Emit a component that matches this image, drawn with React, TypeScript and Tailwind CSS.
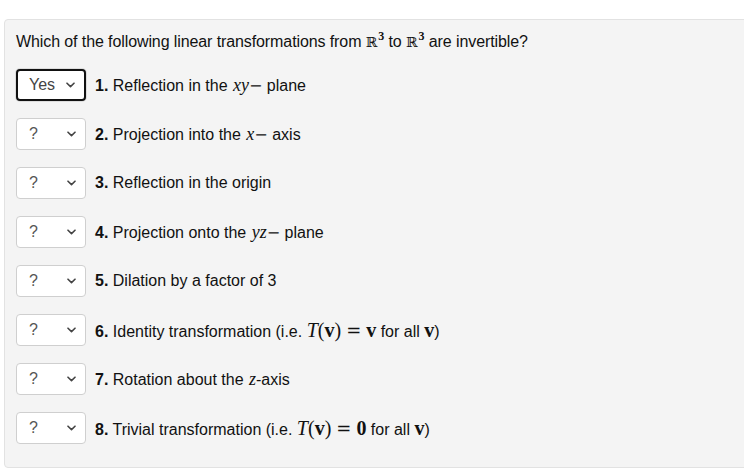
import React from "react";

const MI = ({ children }: { children: React.ReactNode }) => (
  <span className="italic text-[18px] leading-none font-['Liberation_Serif',serif] ml-[1px]">{children}</span>
);

const Minus = () => (
  <span className="text-[16px] leading-none font-['DejaVu_Serif',serif]">−</span>
);

const R = () => (
  <span className="inline-flex items-start leading-none">
    <span className="text-[14px] font-['DejaVu_Serif',serif]">ℝ</span>
    <span className="text-[12px] font-bold font-['Liberation_Serif',serif] relative -top-[5px] ml-[1px]">3</span>
  </span>
);

const Chevron = () => (
  <svg width="9" height="6" viewBox="0 0 9 6" className="absolute right-[9px] top-1/2 -translate-y-1/2 pointer-events-none">
    <path d="M1 1.2 L4.5 4.6 L8 1.2" fill="none" stroke="#444" strokeWidth="1.6" strokeLinecap="round" strokeLinejoin="round" />
  </svg>
);

const Select = ({ value, focused = false }: { value: string; focused?: boolean }) => (
  <div
    className={`relative w-[70px] h-[32px] shrink-0 rounded-[4px] bg-white flex items-center pl-[12px] ${
      focused ? "border-[2px] border-[#111] shadow-[0_0_0_1px_#ddd]" : "border border-[#cfcfcf]"
    }`}
  >
    <span className={`text-[16px] ${focused ? "text-[#444] -ml-[1px]" : "text-[#555]"}`}>{value}</span>
    <Chevron />
  </div>
);

const TV = ({ rhs }: { rhs: string }) => (
  <span className="text-[20px] leading-none font-['Liberation_Serif',serif]">
    <i>T</i>(<b>v</b>)<span className="mx-[5px] font-normal font-['DejaVu_Serif',serif] text-[18px]">=</span>
    <b>{rhs}</b>
  </span>
);

const V = () => <b className="text-[20px] leading-none font-['Liberation_Serif',serif]">v</b>;

const rows: { n: string; content: React.ReactNode; v: string }[] = [
  { n: "1.", v: "Yes", content: <>Reflection in the <MI>xy</MI><Minus /> plane</> },
  { n: "2.", v: "?", content: <>Projection into the <MI>x</MI><Minus /> axis</> },
  { n: "3.", v: "?", content: <>Reflection in the origin</> },
  { n: "4.", v: "?", content: <>Projection onto the <MI>yz</MI><Minus /> plane</> },
  { n: "5.", v: "?", content: <>Dilation by a factor of 3</> },
  { n: "6.", v: "?", content: <>Identity transformation (i.e. <TV rhs="v" /> for all <V />)</> },
  { n: "7.", v: "?", content: <>Rotation about the <MI>z</MI>-axis</> },
  { n: "8.", v: "?", content: <>Trivial transformation (i.e. <TV rhs="0" /> for all <V />)</> },
];

export default function App() {
  return (
    <div className="w-[744px] h-[469px] overflow-hidden bg-white pt-[19px] pl-[4px] font-['Liberation_Sans',Arial,sans-serif]">
      <div className="w-[760px] h-[449px] bg-[#f4f4f4] border border-[#e2e2e2] rounded-[4px] pl-[11px] pt-[10px] text-[#111]">
        <div className="text-[16px] leading-[24px] h-[24px] whitespace-nowrap tracking-[-0.1px]">
          Which of the following linear transformations from <R /> to <R /> are invertible?
        </div>
        <div className="flex flex-col gap-[17px] mt-[15px]">
          {rows.map((r, i) => (
            <div key={i} className="flex items-center gap-[9px]">
              <Select value={r.v} focused={i === 0} />
              <div className="text-[16px] leading-none whitespace-nowrap">
                <b>{r.n}</b> {r.content}
              </div>
            </div>
          ))}
        </div>
      </div>
    </div>
  );
}
